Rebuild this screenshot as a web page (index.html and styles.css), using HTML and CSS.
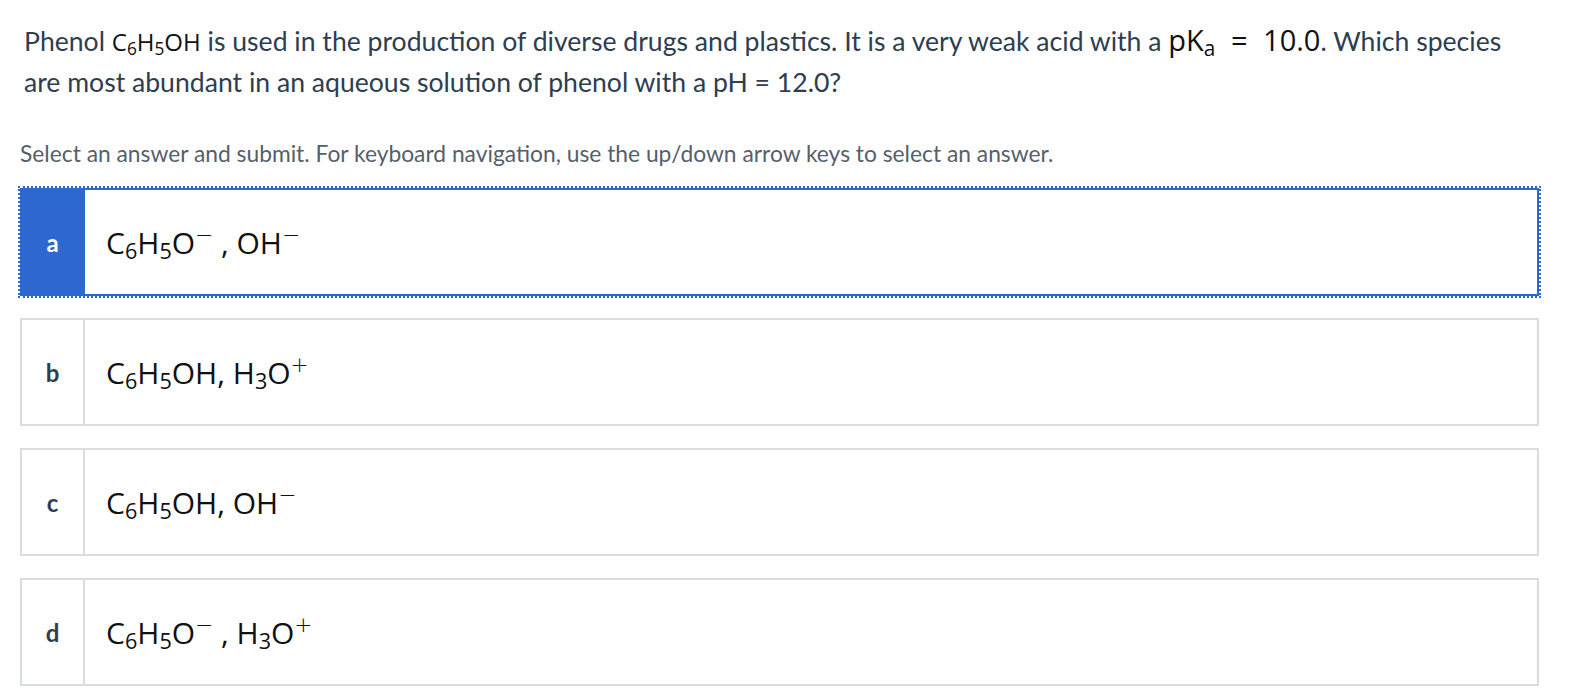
FILE: index.html
```html
<!DOCTYPE html>
<html lang="en">
<head>
    <meta charset="UTF-8">
    <meta name="viewport" content="width=device-width, initial-scale=1.0">
    <title>Question</title>
    <link rel="stylesheet" href="styles.css">
</head>
<body>
    <div class="page">
        <p class="question">Phenol <span class="math formula">C<sub>6</sub>H<sub>5</sub>OH</span> is used in the production of diverse drugs and plastics. It is a very weak acid with a <span class="math pka">pK<sub>a</sub> <span class="eq">=</span> 10.0</span>. Which species are most abundant in an aqueous solution of phenol with a pH = 12.0?</p>
        <p class="hint">Select an answer and submit. For keyboard navigation, use the up/down arrow keys to select an answer.</p>

        <ul class="options">
            <li class="option selected">
                <span class="letter">a</span>
                <span class="answer"><span class="math">C<sub>6</sub>H<sub>5</sub>O<sup>&minus;</sup> , OH<sup>&minus;</sup></span></span>
            </li>
            <li class="option">
                <span class="letter">b</span>
                <span class="answer"><span class="math">C<sub>6</sub>H<sub>5</sub>OH, H<sub>3</sub>O<sup>+</sup></span></span>
            </li>
            <li class="option">
                <span class="letter">c</span>
                <span class="answer"><span class="math">C<sub>6</sub>H<sub>5</sub>OH, OH<sup>&minus;</sup></span></span>
            </li>
            <li class="option">
                <span class="letter">d</span>
                <span class="answer"><span class="math">C<sub>6</sub>H<sub>5</sub>O<sup>&minus;</sup> , H<sub>3</sub>O<sup>+</sup></span></span>
            </li>
        </ul>
    </div>
</body>
</html>
```

FILE: styles.css
```css
body {
    margin: 0;
    background: #fff;
    font-family: Lato, "Noto Sans", sans-serif;
    color: #2d3e50;
}
.page {
    padding: 20px 33px 0 20px;
}
.question {
    margin: 0 0 0 4px;
    font-size: 26.6px;
    line-height: 40px;
}
.math {
    font-family: "Open Sans", "DejaVu Sans", sans-serif;
    font-weight: 400;
    color: #111;
}
.question .formula {
    font-size: 24px;
}
.question .pka {
    font-size: 29px;
}
.math sub, .math sup {
    font-size: 0.72em;
    line-height: 0;
}
.math sub {
    vertical-align: -0.22em;
}
.math sup {
    vertical-align: 0.55em;
    font-family: "DejaVu Sans", sans-serif;
    font-weight: 300;
}
.eq {
    margin: 0 8px;
}
.hint {
    margin: 36px 0 20px 0;
    font-size: 22.8px;
    line-height: 30px;
    color: #555f6b;
}
.options {
    list-style: none;
    margin: 0;
    padding: 0;
}
.option {
    display: flex;
    height: 108px;
    box-sizing: border-box;
    margin-bottom: 22px;
    border: 2px solid #d9dde2;
    background: #fff;
}
.letter {
    width: 61px;
    flex-shrink: 0;
    display: flex;
    align-items: center;
    justify-content: center;
    border-right: 2px solid #d9dde2;
    font-size: 24px;
    font-weight: 700;
    color: #2d3e50;
}
.answer {
    display: flex;
    align-items: center;
    padding-left: 21px;
    font-size: 30px;
    white-space: pre;
}
.option.selected {
    border-color: #2f67d0;
    outline: 2px dotted #2f67d0;
}
.option.selected .letter {
    background: #2f67d0;
    border-right-color: #2f67d0;
    color: #fff;
}
```
